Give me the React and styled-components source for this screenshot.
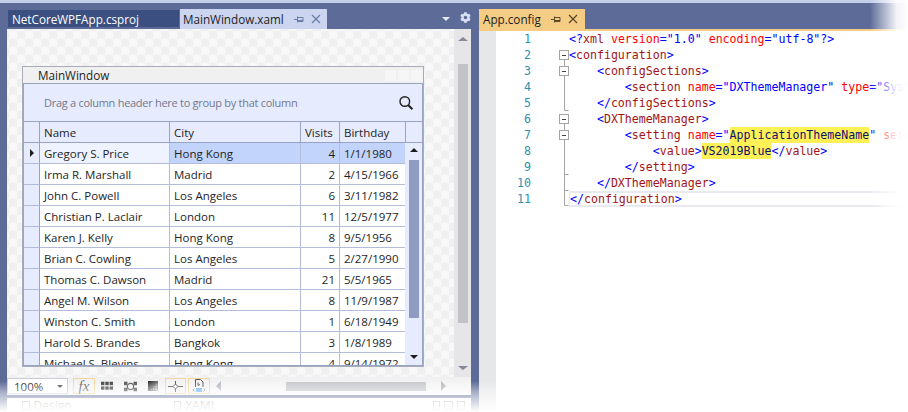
import React from "react";
import styled, { createGlobalStyle } from "styled-components";
import { FaCog } from "react-icons/fa";

const Global = createGlobalStyle`
  html, body { margin: 0; padding: 0; background: #fff; }
  * { box-sizing: border-box; }
`;

const uiFont = `"Open Sans", "Noto Sans", sans-serif`;
const codeFont = `"DejaVu Sans Mono", "Liberation Mono", monospace`;

const Page = styled.div`
  position: relative;
  width: 908px;
  height: 412px;
  overflow: hidden;
  background: #5d6b99;
  font-family: ${uiFont};
  font-size: 11.5px;
  color: #1e1e1e;
`;
const TopStrip = styled.div`
  height: 3px;
  background: #c4cfea;
`;
const Columns = styled.div`
  display: flex;
  height: 409px;
  padding-left: 7px;
  gap: 8px;
`;
const LeftPane = styled.div`
  width: 464px;
  display: flex;
  flex-direction: column;
`;
const RightPane = styled.div`
  flex: 1;
  display: flex;
  flex-direction: column;
`;
const TabStrip = styled.div`
  height: 26px;
  display: flex;
  align-items: flex-end;
`;
const Tab = styled.div`
  display: flex;
  align-items: center;
  height: ${(p) => (p.$kind === "dark" ? "17px" : "20px")};
  margin-bottom: ${(p) => (p.$kind === "dark" ? "2px" : "0")};
  margin-left: ${(p) => (p.$kind === "orange" ? "0" : "1px")};
  width: ${(p) => p.$w}px;
  padding-left: ${(p) => p.$pad}px;
  background: ${(p) =>
    p.$kind === "dark" ? "#3b4f81" : p.$kind === "orange" ? "#f5cc84" : "#ccd5f0"};
  color: ${(p) => (p.$kind === "dark" ? "#fff" : "#1e1e1e")};
  font-size: 11.7px;
  white-space: nowrap;
`;
const TabIcons = styled.span`
  display: inline-flex;
  align-items: center;
  gap: 7px;
  margin-left: ${(p) => p.$gap}px;
`;
const StripTools = styled.div`
  margin-left: auto;
  display: flex;
  align-items: center;
  gap: 10px;
  height: 24px;
  color: #d9dff2;
`;
const DropArrow = styled.span`
  width: 0;
  height: 0;
  border-left: 4px solid transparent;
  border-right: 4px solid transparent;
  border-top: 4px solid #e6eaf6;
  margin-top: 3px;
`;
const Surface = styled.div`
  height: 348px;
  display: flex;
`;
const Canvas = styled.div`
  width: 447px;
  padding: 37px 0 0 15px;
  background-color: #f8f8f8;
  background-image: conic-gradient(#f0f0f0 25%, transparent 0 50%, #f0f0f0 0 75%, transparent 0);
  background-size: 16px 16px;
  background-position: 2px 2px;
`;
const VScroll = styled.div`
  width: 17px;
  background: #e6e6e9;
  display: flex;
  flex-direction: column;
  align-items: center;
  padding-top: 8px;
`;
const VThumb = styled.div`
  width: 10px;
  height: 259px;
  margin-top: 23px;
  background: #c2c3c9;
`;
const Arrow = styled.span`
  display: block;
  width: 0;
  height: 0;
  border-left: ${(p) => p.$s}px solid transparent;
  border-right: ${(p) => p.$s}px solid transparent;
  border-${(p) => (p.$down ? "top" : "bottom")}: ${(p) => p.$h || p.$s}px solid ${(p) => p.$c};
`;
const SideArrow = styled.span`
  display: block;
  width: 0;
  height: 0;
  border-top: 5px solid transparent;
  border-bottom: 5px solid transparent;
  border-${(p) => (p.$right ? "left" : "right")}: 5px solid #b9bac2;
`;
const DownSlot = styled.div`
  margin-top: 43px;
`;
const Window = styled.div`
  width: 402px;
  height: 301px;
  border: 1px solid #a9adb9;
  background: #f0f0f0;
  display: flex;
  flex-direction: column;
`;
const TitleBar = styled.div`
  height: 16px;
  flex: none;
  display: flex;
  align-items: center;
  padding-left: 15px;
  font-size: 11.7px;
`;
const WinButtons = styled.div`
  margin-left: auto;
  display: flex;
  gap: 2px;
  padding-right: 1px;
`;
const WinButton = styled.span`
  width: 11px;
  height: 11px;
  background: #f6f6f6;
`;
const Grid = styled.div`
  flex: 1;
  min-height: 0;
  border: 1px solid #98a3c6;
  background: #e6ecfd;
  display: flex;
  flex-direction: column;
`;
const GroupPanel = styled.div`
  height: 38px;
  flex: none;
  display: flex;
  align-items: center;
  justify-content: space-between;
  padding: 0 8px 0 20px;
  border-bottom: 1px solid #98a3c6;
  color: #77768c;
  font-size: 11px;
  letter-spacing: -0.28px;
`;
const HeaderRow = styled.div`
  display: grid;
  grid-template-columns: 16px 130px 131px 39px 66px 16px;
  height: 21px;
  flex: none;
  border-bottom: 1px solid #98a3c6;
`;
const HeaderCell = styled.div`
  display: flex;
  align-items: center;
  padding-left: 4px;
  border-right: 1px solid #98a3c6;
  font-size: 11.5px;
  &:last-child { border-right: 0; }
`;
const Body = styled.div`
  flex: 1;
  min-height: 0;
  display: flex;
`;
const Rows = styled.div`
  width: 382px;
  overflow: hidden;
`;
const Row = styled.div`
  display: grid;
  grid-template-columns: 16px 130px 131px 39px 66px;
  height: 21px;
`;
const Cell = styled.div`
  display: flex;
  align-items: center;
  justify-content: ${(p) => (p.$num ? "flex-end" : "flex-start")};
  padding: 0 4px;
  white-space: nowrap;
  background: ${(p) => (p.$sel ? "#c2d4fb" : p.$focus ? "#eef3ff" : "#fff")};
  border-right: 1px solid #b5bcdb;
  border-bottom: 1px solid #b5bcdb;
  font-size: 11.5px;
`;
const Indicator = styled.div`
  display: flex;
  align-items: center;
  justify-content: center;
  background: #e6ecfd;
  border-right: 1px solid #98a3c6;
  border-bottom: 1px solid #b5bcdb;
`;
const RowArrow = styled.span`
  width: 0;
  height: 0;
  border-top: 4px solid transparent;
  border-bottom: 4px solid transparent;
  border-left: 4px solid #1e1e1e;
`;
const GridScroll = styled.div`
  width: 17px;
  display: flex;
  flex-direction: column;
  align-items: center;
  padding-top: 5px;
`;
const GridThumb = styled.div`
  width: 10px;
  height: 158px;
  margin-top: 8px;
  background: #8f9cc1;
`;
const GridDown = styled.div`
  margin-top: auto;
  margin-bottom: 6px;
`;
const Toolbar = styled.div`
  height: 18px;
  display: flex;
  align-items: center;
  background: linear-gradient(#f0f0f2, #fafafb);
`;
const Combo = styled.div`
  width: 61px;
  height: 16px;
  display: flex;
  align-items: center;
  justify-content: space-between;
  padding: 0 4px 0 6px;
  background: #fff;
  border: 1px solid #ccced6;
  font-size: 11.5px;
  margin-right: 5px;
`;
const ToolBtn = styled.div`
  display: flex;
  align-items: center;
  justify-content: center;
  width: ${(p) => p.$w}px;
  height: 16px;
  margin-right: ${(p) => p.$mr}px;
  border: 1px solid ${(p) => (p.$on ? "#f3d79f" : "transparent")};
  font-family: "Liberation Serif", serif;
  font-style: italic;
  font-size: 15px;
  color: #666;
`;
const HScroll = styled.div`
  flex: 1;
  display: flex;
  align-items: center;
  padding: 0 8px 0 6px;
`;
const HThumb = styled.div`
  width: 140px;
  height: 9px;
  margin: 0 15px 0 65px;
  background: #c8c9cd;
`;
const ViewBar = styled.div`
  height: 14px;
  display: flex;
  align-items: center;
  gap: 4px;
  margin-top: 3px;
  padding: 0 6px 0 15px;
  background: #fff;
  color: #8f8f8f;
  font-size: 12px;
`;
const ViewBox = styled.span`
  width: ${(p) => p.$w || 9}px;
  height: 9px;
  margin-left: ${(p) => p.$ml || 0}px;
  border: 1px solid #9a9a9a;
`;
const CodeArea = styled.div`
  flex: 1;
  display: flex;
  background: #fff;
  border-top: 2px solid #f5cc84;
  height: 379px;
`;
const Margin = styled.div`
  width: 17px;
  background: #e6e7e8;
`;
const LineNumbers = styled.div`
  width: 35px;
  text-align: right;
  color: #2b91af;
  font: 11.6px/16px ${codeFont};
`;
const Outline = styled.svg`
  width: 38px;
  height: 180px;
  flex: none;
`;
const Code = styled.div`
  flex: 1;
  font: 11.6px/16px ${codeFont};
  white-space: pre;
  overflow: hidden;
`;
const CodeLine = styled.div`
  height: 16px;
  border-style: solid;
  border-color: #e9e9f0;
  border-width: ${(p) => (p.$current ? "2px 0 2px 1px" : "0")};
  line-height: ${(p) => (p.$current ? "12px" : "16px")};
`;
const B = styled.span`color: #0000ff;`;
const E = styled.span`color: #a31515;`;
const A = styled.span`color: #ff0000;`;
const Hit = styled.span`
  background: #fff056;
  color: #10106a;
  display: inline-block;
  height: 16px;
`;
const FadeRight = styled.div`
  position: absolute;
  top: 0;
  right: 0;
  width: 38px;
  height: 100%;
  background: linear-gradient(90deg, rgba(255,255,255,0), rgba(255,255,255,0.92) 70%, #fff);
`;
const FadeBottom = styled.div`
  position: absolute;
  left: 0;
  right: 0;
  top: 381px;
  bottom: 0;
  background: linear-gradient(
    rgba(255,255,255,0),
    rgba(255,255,255,0.5) 40%,
    rgba(255,255,255,0.8) 75%,
    #fff
  );
`;

const people = [
  ["Gregory S. Price", "Hong Kong", 4, "1/1/1980"],
  ["Irma R. Marshall", "Madrid", 2, "4/15/1966"],
  ["John C. Powell", "Los Angeles", 6, "3/11/1982"],
  ["Christian P. Laclair", "London", 11, "12/5/1977"],
  ["Karen J. Kelly", "Hong Kong", 8, "9/5/1956"],
  ["Brian C. Cowling", "Los Angeles", 5, "2/27/1990"],
  ["Thomas C. Dawson", "Madrid", 21, "5/5/1965"],
  ["Angel M. Wilson", "Los Angeles", 8, "11/9/1987"],
  ["Winston C. Smith", "London", 1, "6/18/1949"],
  ["Harold S. Brandes", "Bangkok", 3, "1/8/1989"],
  ["Michael S. Blevins", "Hong Kong", 4, "9/14/1972"],
];

const Pin = ({ c }) => (
  <svg width="10" height="9" viewBox="0 0 10 9" fill="none" stroke={c}>
    <path d="M0 4.5h3M3.5 1.5v6M3.5 2.5h5.5v4H3.5M3.5 5.5h5.5" />
  </svg>
);
const Close = ({ c }) => (
  <svg width="10" height="10" viewBox="0 0 10 10" stroke={c} strokeWidth="1.3">
    <path d="M1 1l8 8M9 1l-8 8" />
  </svg>
);
const Search = () => (
  <svg width="16" height="16" viewBox="0 0 16 16" fill="none" stroke="#222" strokeWidth="1.4">
    <circle cx="6.8" cy="6.5" r="4.8" />
    <path d="M10.4 10.2l4 4" strokeWidth="2" />
  </svg>
);
const BlocksIcon = () => (
  <svg width="14" height="10" viewBox="0 0 14 10" fill="#444">
    <path d="M0 0h4v4H0zM5 0h4v4H5zM10 0h4v4h-4zM0 5.5h4v4H0zM5 5.5h4v4H5zM10 5.5h4v4h-4z" />
  </svg>
);
const SnapIcon = () => (
  <svg width="15" height="11" viewBox="0 0 15 11" fill="#555">
    <path d="M0 0h4v4H0zM11 0h4v4h-4zM0 7h4v4H0zM11 7h4v4h-4z" />
    <circle cx="7.5" cy="5.5" r="3.6" fill="none" stroke="#555" strokeWidth="1.4" />
  </svg>
);
const CheckIcon = () => (
  <svg width="12" height="12" viewBox="0 0 12 12">
    <defs>
      <linearGradient id="chk" x1="0" y1="0" x2="1" y2="1">
        <stop offset="0" stopColor="#222" />
        <stop offset="1" stopColor="#bbb" />
      </linearGradient>
      <pattern id="dots" width="2" height="2" patternUnits="userSpaceOnUse">
        <rect width="1" height="1" fill="#fff" />
      </pattern>
    </defs>
    <rect width="12" height="12" fill="url(#chk)" />
    <path d="M12 2v10H2z" fill="url(#dots)" />
  </svg>
);
const SnapLine = () => (
  <svg width="15" height="11" viewBox="0 0 15 11" fill="none" stroke="#555">
    <path d="M0 5.5h15M7.5 0v11" />
    <path d="M7.5 3l2.5 2.5-2.5 2.5-2.5-2.5z" fill="#fff" />
  </svg>
);
const DocIcon = () => (
  <svg width="14" height="14" viewBox="0 0 14 14" fill="none" stroke="#555">
    <path d="M3.5 8V.5h5l2.5 2.5v5" />
    <path d="M6 3.5v3l2-1" />
    <rect x="4" y="9" width="6" height="4" fill="#6fb5ee" stroke="none" />
    <path d="M2.5 9.5L1 11l1.5 1.5M11.5 9.5L13 11l-1.5 1.5" stroke="#999" />
  </svg>
);

// one box per collapsible line of the XML, y = 8 + 16 * (line - 1)
const foldBoxes = [24, 40, 88, 104];
const FoldMargin = () => (
  <Outline viewBox="0 0 38 180">
    <path
      d="M33.5 24V79.5h4M33.5 88V174.5h4M33.5 143.5h4M33.5 159.5h4"
      fill="none"
      stroke="#a5a5a5"
    />
    {foldBoxes.map((y) => (
      <g key={y}>
        <rect x="28.5" y={y - 4.5} width="9" height="9" fill="#fff" stroke="#a5a5a5" />
        <path d={`M31 ${y + 0.5}h4`} stroke="#444" />
      </g>
    ))}
  </Outline>
);

const lines = [
  <><B>&lt;?</B><E>xml</E> <A>version</A><B>="1.0"</B> <A>encoding</A><B>="utf-8"?&gt;</B></>,
  <><B>&lt;</B><E>configuration</E><B>&gt;</B></>,
  <>    <B>&lt;</B><E>configSections</E><B>&gt;</B></>,
  <>        <B>&lt;</B><E>section</E> <A>name</A><B>="DXThemeManager"</B> <A>type</A><B>="System.Configuration"</B></>,
  <>    <B>&lt;/</B><E>configSections</E><B>&gt;</B></>,
  <>    <B>&lt;</B><E>DXThemeManager</E><B>&gt;</B></>,
  <>        <B>&lt;</B><E>setting</E> <A>name</A><B>="</B><Hit>ApplicationThemeName</Hit><B>"</B> <A>serializeAs</A></>,
  <>            <B>&lt;</B><E>value</E><B>&gt;</B><Hit>VS2019Blue</Hit><B>&lt;/</B><E>value</E><B>&gt;</B></>,
  <>        <B>&lt;/</B><E>setting</E><B>&gt;</B></>,
  <>    <B>&lt;/</B><E>DXThemeManager</E><B>&gt;</B></>,
  <><B>&lt;/</B><E>configuration</E><B>&gt;</B></>,
];

export default function App() {
  return (
    <Page>
      <Global />
      <TopStrip />
      <Columns>
        <LeftPane>
          <TabStrip>
            <Tab $kind="dark" $w={171} $pad={4}>NetCoreWPFApp.csproj</Tab>
            <Tab $w={147} $pad={3}>
              MainWindow.xaml
              <TabIcons $gap={10}>
                <Pin c="#6d7ba6" />
                <Close c="#6d7ba6" />
              </TabIcons>
            </Tab>
            <StripTools>
              <DropArrow />
              <FaCog size={11} />
            </StripTools>
          </TabStrip>
          <Surface>
            <Canvas>
              <Window>
                <TitleBar>
                  MainWindow
                  <WinButtons>
                    <WinButton />
                    <WinButton />
                    <WinButton />
                  </WinButtons>
                </TitleBar>
                <Grid>
                  <GroupPanel>
                    Drag a column header here to group by that column
                    <Search />
                  </GroupPanel>
                  <HeaderRow>
                    <HeaderCell />
                    <HeaderCell>Name</HeaderCell>
                    <HeaderCell>City</HeaderCell>
                    <HeaderCell>Visits</HeaderCell>
                    <HeaderCell>Birthday</HeaderCell>
                    <HeaderCell />
                  </HeaderRow>
                  <Body>
                    <Rows>
                      {people.map((p, i) => (
                        <Row key={p[0]}>
                          <Indicator>{i === 0 && <RowArrow />}</Indicator>
                          <Cell $focus={i === 0}>{p[0]}</Cell>
                          <Cell $sel={i === 0}>{p[1]}</Cell>
                          <Cell $sel={i === 0} $num>{p[2]}</Cell>
                          <Cell $sel={i === 0}>{p[3]}</Cell>
                        </Row>
                      ))}
                    </Rows>
                    <GridScroll>
                      <Arrow $s={4} $h={4} $c="#1e1e1e" />
                      <GridThumb />
                      <GridDown>
                        <Arrow $s={4} $h={4} $c="#1e1e1e" $down />
                      </GridDown>
                    </GridScroll>
                  </Body>
                </Grid>
              </Window>
            </Canvas>
            <VScroll>
              <Arrow $s={5} $h={4} $c="#868999" />
              <VThumb />
              <DownSlot>
                <Arrow $s={5} $h={4} $c="#868999" $down />
              </DownSlot>
            </VScroll>
          </Surface>
          <Toolbar>
            <Combo>
              100%
              <Arrow $s={3} $c="#555" $down />
            </Combo>
            <ToolBtn $on $w={22} $mr={5}>fx</ToolBtn>
            <ToolBtn $w={14} $mr={9}><BlocksIcon /></ToolBtn>
            <ToolBtn $w={15} $mr={9}><SnapIcon /></ToolBtn>
            <ToolBtn $w={12} $mr={6}><CheckIcon /></ToolBtn>
            <ToolBtn $on $w={21} $mr={2}><SnapLine /></ToolBtn>
            <ToolBtn $on $w={22} $mr={0}><DocIcon /></ToolBtn>
            <HScroll>
              <SideArrow />
              <HThumb />
              <SideArrow $right />
            </HScroll>
          </Toolbar>
          <ViewBar>
            <ViewBox />
            Design
            <ViewBox $ml={98} />
            XAML
            <ViewBox $ml={212} />
            <ViewBox $w={11} />
            <ViewBox />
          </ViewBar>
        </LeftPane>
        <RightPane>
          <TabStrip>
            <Tab $kind="orange" $w={106} $pad={4}>
              App.config
              <TabIcons $gap={10}>
                <Pin c="#5c4a25" />
                <Close c="#5c4a25" />
              </TabIcons>
            </Tab>
          </TabStrip>
          <CodeArea>
            <Margin />
            <LineNumbers>
              {lines.map((_, i) => (
                <div key={i}>{i + 1}</div>
              ))}
            </LineNumbers>
            <FoldMargin />
            <Code>
              {lines.map((l, i) => (
                <CodeLine key={i} $current={i === 10}>{l}</CodeLine>
              ))}
            </Code>
          </CodeArea>
        </RightPane>
      </Columns>
      <FadeRight />
      <FadeBottom />
    </Page>
  );
}
